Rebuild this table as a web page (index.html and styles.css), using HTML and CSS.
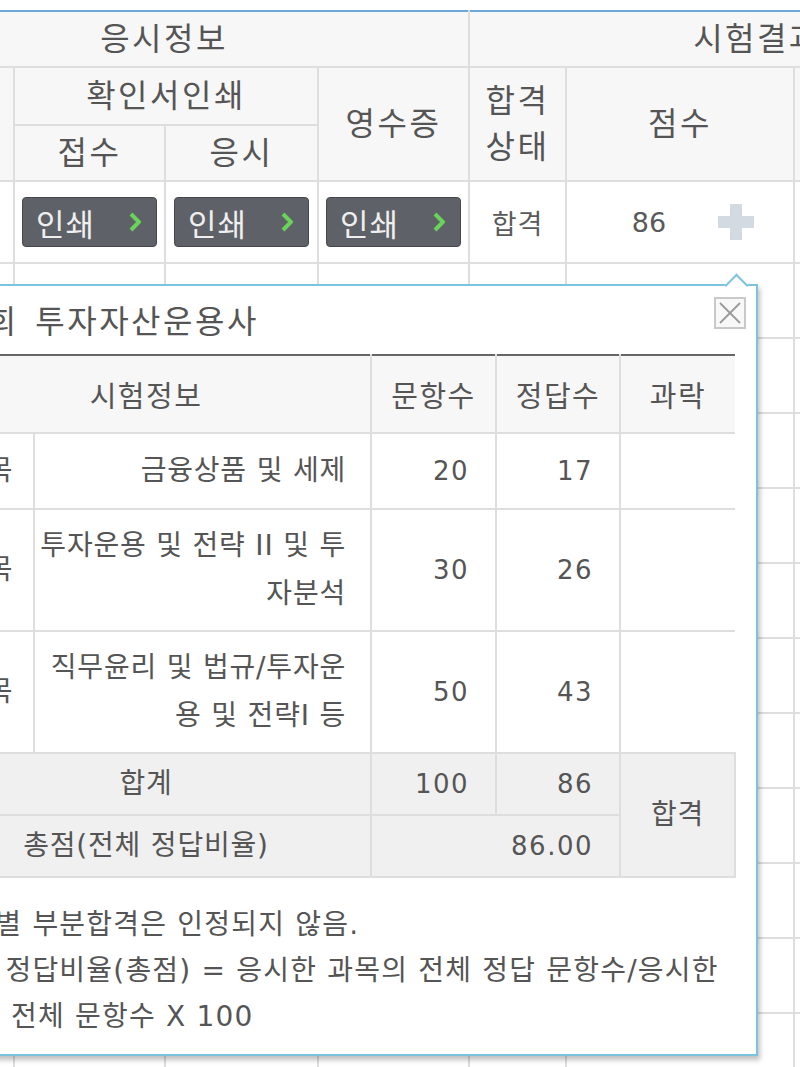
FILE: index.html
```html
<!DOCTYPE html>
<html lang="ko">
<head>
<meta charset="utf-8">
<title>시험결과 조회</title>
<link rel="stylesheet" href="styles.css">
</head>
<body>
<div class="viewport">
  <div class="sheet">
    <table class="results">
      <colgroup>
        <col class="c-name"><col class="c-p1"><col class="c-p2"><col class="c-rc"><col class="c-st"><col class="c-sc"><col class="c-ex">
      </colgroup>
      <thead>
        <tr class="h1">
          <th colspan="4" class="top">응시정보</th>
          <th colspan="3" class="top">시험결과</th>
        </tr>
        <tr class="h2">
          <th rowspan="2">회차</th>
          <th colspan="2">확인서인쇄</th>
          <th rowspan="2">영수증</th>
          <th rowspan="2">합격<br>상태</th>
          <th rowspan="2">점수</th>
          <th rowspan="2">과락여부</th>
        </tr>
        <tr class="h3">
          <th>접수</th>
          <th>응시</th>
        </tr>
      </thead>
      <tbody>
        <tr class="data">
          <td>29회</td>
          <td><a class="btn" href="#">인쇄<svg class="chev" width="12" height="20" viewBox="0 0 12 20"><polyline points="2,2 10,10 2,18" fill="none" stroke="#69d35a" stroke-width="4"/></svg></a></td>
          <td><a class="btn" href="#">인쇄<svg class="chev" width="12" height="20" viewBox="0 0 12 20"><polyline points="2,2 10,10 2,18" fill="none" stroke="#69d35a" stroke-width="4"/></svg></a></td>
          <td><a class="btn" href="#">인쇄<svg class="chev" width="12" height="20" viewBox="0 0 12 20"><polyline points="2,2 10,10 2,18" fill="none" stroke="#69d35a" stroke-width="4"/></svg></a></td>
          <td>합격</td>
          <td class="score"><span class="val">86</span><svg class="plus" width="36" height="36" viewBox="0 0 36 36"><rect x="12" y="0" width="12" height="36" fill="#d3dae2"/><rect x="0" y="12" width="36" height="12" fill="#d3dae2"/></svg></td>
          <td></td>
        </tr>
        <tr class="empty"><td></td><td></td><td></td><td></td><td></td><td></td><td></td></tr>
        <tr class="empty"><td></td><td></td><td></td><td></td><td></td><td></td><td></td></tr>
        <tr class="empty"><td></td><td></td><td></td><td></td><td></td><td></td><td></td></tr>
        <tr class="empty"><td></td><td></td><td></td><td></td><td></td><td></td><td></td></tr>
        <tr class="empty"><td></td><td></td><td></td><td></td><td></td><td></td><td></td></tr>
        <tr class="empty"><td></td><td></td><td></td><td></td><td></td><td></td><td></td></tr>
        <tr class="empty"><td></td><td></td><td></td><td></td><td></td><td></td><td></td></tr>
        <tr class="empty"><td></td><td></td><td></td><td></td><td></td><td></td><td></td></tr>
        <tr class="empty"><td></td><td></td><td></td><td></td><td></td><td></td><td></td></tr>
        <tr class="empty"><td></td><td></td><td></td><td></td><td></td><td></td><td></td></tr>
        <tr class="empty"><td></td><td></td><td></td><td></td><td></td><td></td><td></td></tr>
      </tbody>
    </table>
  </div>

  <div class="popup">
    <span class="arrow"></span>
    <button class="close" type="button" aria-label="닫기"><svg width="28" height="28" viewBox="0 0 28 28"><line x1="4" y1="4" x2="24" y2="24" stroke="#999" stroke-width="1.8"/><line x1="24" y1="4" x2="4" y2="24" stroke="#999" stroke-width="1.8"/></svg></button>
    <h2 class="pop-title">제29회 투자자산운용사</h2>
    <table class="detail">
      <colgroup><col class="d1"><col class="d2"><col class="d3"><col class="d4"><col class="d5"></colgroup>
      <thead>
        <tr><th colspan="2">시험정보</th><th>문항수</th><th>정답수</th><th class="last">과락</th></tr>
      </thead>
      <tbody>
        <tr class="r1"><td class="subj">1과목</td><td class="name">금융상품 및 세제</td><td class="num">20</td><td class="num">17</td><td class="last"></td></tr>
        <tr class="r2"><td class="subj">2과목</td><td class="name">투자운용 및 전략 II 및 투자분석</td><td class="num">30</td><td class="num">26</td><td class="last"></td></tr>
        <tr class="r2"><td class="subj">3과목</td><td class="name">직무윤리 및 법규/투자운용 및 전략I 등</td><td class="num">50</td><td class="num">43</td><td class="last"></td></tr>
      </tbody>
      <tfoot>
        <tr class="sum"><td colspan="2">합계</td><td class="num">100</td><td class="num">86</td><td rowspan="2" class="result">합격</td></tr>
        <tr class="sum"><td colspan="2">총점(전체 정답비율)</td><td colspan="2" class="num">86.00</td></tr>
      </tfoot>
    </table>
    <ul class="notes">
      <li>- 과목별 부분합격은 인정되지 않음.</li>
      <li>- 전체 정답비율(총점) = 응시한 과목의 전체 정답 문항수/응시한 과목의 전체 문항수 X 100</li>
    </ul>
  </div>
</div>
</body>
</html>
```

FILE: styles.css
```css
* { box-sizing: border-box; }
html, body { margin: 0; padding: 0; }
body {
  font-family: "DejaVu Sans", "Noto Sans CJK KR", sans-serif;
  color: #555;
  background: #fff;
}
.viewport {
  position: relative;
  width: 800px;
  height: 1067px;
  overflow: hidden;
}
.sheet {
  margin-left: -142px;
  padding-top: 10px;
}

/* background results table */
.results {
  border-collapse: collapse;
  table-layout: fixed;
  width: 1186px;
}
.c-name { width: 155px; }
.c-p1 { width: 151px; }
.c-p2 { width: 153px; }
.c-rc { width: 151px; }
.c-st { width: 97px; }
.c-sc { width: 228px; }
.c-ex { width: 251px; }

.results th,
.results td {
  border: 2px solid #dedede;
  padding: 0;
  text-align: center;
  vertical-align: middle;
}
.results th {
  background: #f7f7f7;
  font-weight: normal;
  font-size: 32px;
  letter-spacing: 2.5px;
  line-height: 46px;
  color: #555;
}
.results th.top { border-top: 2px solid #6aa8d6; }
.h1 { height: 56px; }
.h2 { height: 58px; }
.h3 { height: 56px; }
.data { height: 82px; }
.empty { height: 75px; }
.results td {
  font-size: 27px;
  letter-spacing: 1px;
  color: #5a5a5a;
}

.btn {
  display: inline-flex;
  align-items: center;
  justify-content: space-between;
  width: 135px;
  height: 50px;
  padding: 0 15px 0 13px;
  background: #5e6167;
  border: 1px solid #46484c;
  border-radius: 4px;
  color: #efefef;
  font-size: 31px;
  letter-spacing: 1px;
  text-decoration: none;
  vertical-align: middle;
}
.chev { display: block; }

.results td.score {
  padding-left: 26px;
  letter-spacing: 0;
}
.score .val { vertical-align: middle; }
.plus { vertical-align: middle; margin-left: 52px; }

/* popup */
.popup {
  position: absolute;
  left: -104px;
  top: 284px;
  width: 862px;
  height: 772px;
  padding: 18px 22px 0;
  background: #fff;
  border: 2px solid #7cc3e0;
  box-shadow: 2px 4px 5px rgba(0, 0, 0, 0.25);
}
.arrow {
  position: absolute;
  top: -9.5px;
  left: 829.5px;
  width: 17px;
  height: 17px;
  background: #fff;
  border-top: 2px solid #7cc3e0;
  border-left: 2px solid #7cc3e0;
  transform: rotate(45deg);
}
.close {
  position: absolute;
  top: 11px;
  right: 10px;
  width: 32px;
  height: 32px;
  padding: 0;
  border: 2px solid #c9c9c9;
  background: #f8f8f8;
  display: flex;
  align-items: center;
  justify-content: center;
}
.pop-title {
  margin: 0;
  font-size: 32px;
  font-weight: normal;
  letter-spacing: 2.5px;
  word-spacing: 4px;
  text-indent: -11px;
  line-height: 36px;
  color: #555;
}

.detail {
  margin-top: 14px;
  border-collapse: collapse;
  table-layout: fixed;
  width: 814px;
}
.d1 { width: 113px; }
.d2 { width: 337px; }
.d3 { width: 125px; }
.d4 { width: 124px; }
.d5 { width: 115px; }
.detail th,
.detail td {
  border: 2px solid #dedede;
  padding: 0;
  text-align: center;
  vertical-align: middle;
  color: #555;
}
.detail th {
  height: 78px;
  background: #f7f7f7;
  border-top: 2px solid #666;
  font-weight: normal;
  font-size: 29px;
  letter-spacing: 1.5px;
}
.detail .last { border-right: 0; }
.detail td {
  font-size: 28px;
  letter-spacing: 0.8px;
  line-height: 48px;
}
.detail .r1 { height: 76px; }
.detail .r2 { height: 122px; }
.detail .sum { height: 62px; }
.detail .sum td { background: #f0f0f0; }
.detail td.name { text-align: right; padding: 0 24px 0 0; }
.detail td.num {
  text-align: right;
  padding-right: 26px;
  font-size: 26px;
  letter-spacing: 1.5px;
}
.detail td.result { border-right: 2px solid #dedede; }

.notes {
  margin: 24px 0 0;
  padding: 0;
  list-style: none;
  font-size: 28px;
  line-height: 46px;
  letter-spacing: 1.2px;
  word-break: keep-all;
  color: #555;
}
```
